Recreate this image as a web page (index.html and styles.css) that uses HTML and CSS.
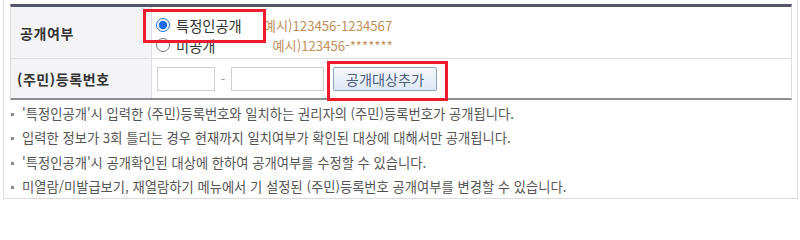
FILE: index.html
```html
<!DOCTYPE html>
<html lang="ko">
<head>
<meta charset="utf-8">
<link rel="stylesheet" href="styles.css">
</head>
<body>
<div class="wrap">
  <div class="form">
    <div class="row row-open">
      <div class="th">공개여부</div>
      <div class="td radios">
        <label class="opt"><input type="radio" name="open" checked><span class="lbl">특정인공개</span><span class="ex ex1">예시)123456-1234567</span></label>
        <label class="opt"><input type="radio" name="open"><span class="lbl">미공개</span><span class="ex ex2">예시)123456-*******</span></label>
        <span class="mark mark1"></span>
      </div>
    </div>
    <div class="row row-num">
      <div class="th th2">(주민)등록번호</div>
      <div class="td nums">
        <input class="in in1" type="text">
        <span class="dash">-</span>
        <input class="in in2" type="text">
        <button class="btn" type="button">공개대상추가</button>
        <span class="mark mark2"></span>
      </div>
    </div>
  </div>
  <ul class="notes">
    <li>'특정인공개'시 입력한 (주민)등록번호와 일치하는 권리자의 (주민)등록번호가 공개됩니다.</li>
    <li>입력한 정보가 3회 틀리는 경우 현재까지 일치여부가 확인된 대상에 대해서만 공개됩니다.</li>
    <li>'특정인공개'시 공개확인된 대상에 한하여 공개여부를 수정할 수 있습니다.</li>
    <li>미열람/미발급보기, 재열람하기 메뉴에서 기 설정된 (주민)등록번호 공개여부를 변경할 수 있습니다.</li>
  </ul>
</div>
</body>
</html>
```
FILE: styles.css
```css
* { box-sizing: border-box; }
html, body { margin: 0; padding: 0; background: #fff; }
body {
  font-family: "Noto Sans CJK KR", "Noto Sans", sans-serif;
  font-size: 13px;
  color: #444;
}
.wrap {
  width: 795px;
  height: 199px;
  margin-left: 3px;
  border: 1px solid #dcdcdc;
  border-top: none;
  padding: 4px 5px 0 6px;
}
.form {
  border-top: 3px solid #55556a;
  border-bottom: 2px solid #8c8c94;
  border-left: 1px solid #dedede;
  border-right: 1px solid #dedede;
}
.row {
  display: grid;
  grid-template-columns: 141px 1fr;
}
.row-open { height: 52px; border-bottom: 1px solid #dedede; }
.row-num { height: 39px; }
.th {
  background: #f4f4f6;
  border-right: 1px solid #dedede;
  display: flex;
  align-items: center;
  padding-left: 9px;
  font-weight: bold;
  color: #333;
  font-size: 14px;
  letter-spacing: 0.6px;
}
.th2 { padding-left: 6px; }
.td { position: relative; }
.radios {
  display: flex;
  flex-direction: column;
  padding: 8px 0 0 4px;
}
.opt {
  display: flex;
  align-items: center;
  height: 20px;
  color: #333;
  font-size: 14.3px;
}
.opt input {
  margin: 0 6px 0 0;
  width: 14px;
  height: 14px;
  accent-color: #1a6fe8;
}
.ex { color: #c0905c; font-size: 13.2px; }
.ex1 { margin-left: 22px; }
.ex2 { margin-left: 57px; }
.nums {
  display: flex;
  align-items: center;
  padding-left: 5px;
}
.in {
  height: 24px;
  border: 1px solid #cfcfcf;
  background: #fff;
  margin: 0;
  padding: 0 3px;
  font: inherit;
}
.in1 { width: 58px; }
.in2 { width: 93px; }
.dash { width: 16px; text-align: center; color: #999; }
.btn {
  margin-left: 9px;
  width: 104px;
  height: 24px;
  border: 1px solid #8aa4c8;
  border-radius: 2px;
  background: linear-gradient(#f6f9fd, #dde7f3);
  color: #4e5f7e;
  font-family: inherit;
  font-size: 14.2px;
  padding: 0;
}
.mark {
  position: absolute;
  border: 3px solid #ee1b2f;
  pointer-events: none;
}
.mark1 { left: -9px; top: 2px; width: 123px; height: 34px; }
.mark2 { left: 175px; top: 2px; width: 121px; height: 40px; }
.notes {
  list-style: none;
  margin: 2px 0 0;
  padding: 0;
}
.notes li {
  line-height: 24.3px;
  height: 24.3px;
  padding-left: 12px;
  position: relative;
  color: #555;
  font-size: 13.3px;
  white-space: nowrap;
}
.notes li::before {
  content: "";
  position: absolute;
  left: 1px;
  top: 11px;
  width: 3px;
  height: 3px;
  background: #8a8a8a;
}
```
